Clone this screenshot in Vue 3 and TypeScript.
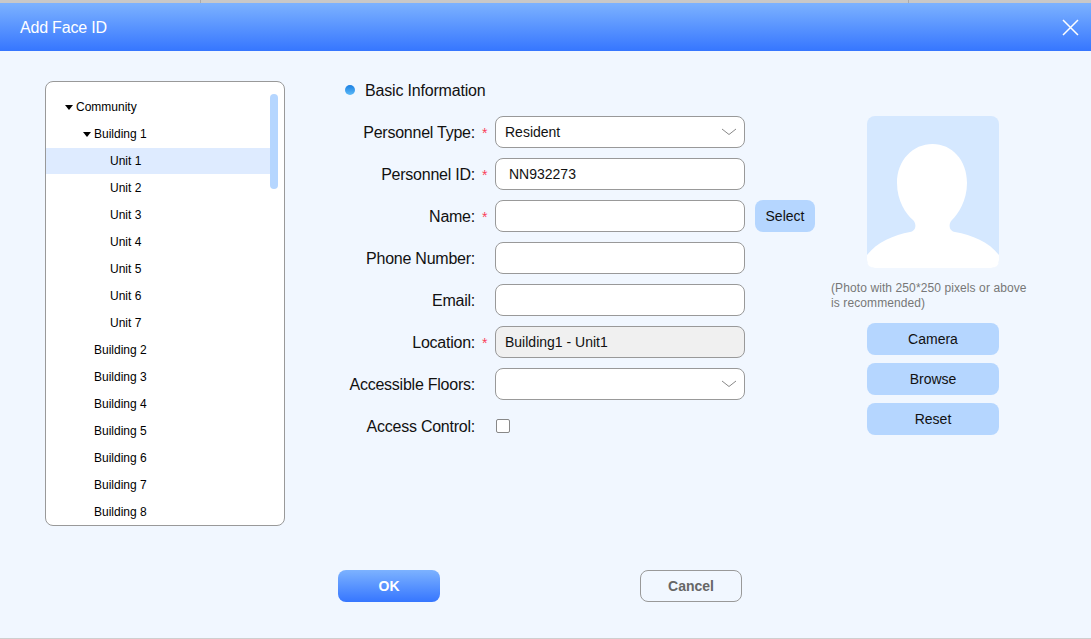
<script setup lang="ts">
interface TreeRow { label: string; level: number; caret?: boolean; selected?: boolean }
const rows: TreeRow[] = [
  { label: 'Community', level: 0, caret: true },
  { label: 'Building 1', level: 1, caret: true },
  { label: 'Unit 1', level: 3, selected: true },
  ...[2, 3, 4, 5, 6, 7].map((n) => ({ label: `Unit ${n}`, level: 3 })),
  ...[2, 3, 4, 5, 6, 7, 8].map((n) => ({ label: `Building ${n}`, level: 2 })),
]
const photoActions = ['Camera', 'Browse', 'Reset']
</script>

<template>
  <div class="dialog">
    <div class="top-strip"></div>
    <header class="titlebar">
      <span class="title">Add Face ID</span>
      <button class="close" aria-label="Close">
        <svg width="17" height="17" viewBox="0 0 17 17"><path d="M1 1 L16 16 M16 1 L1 16" stroke="#fff" stroke-width="1.5" fill="none" /></svg>
      </button>
    </header>
    <main class="body">
      <div class="content">
        <nav class="tree">
          <div
            v-for="row in rows"
            :key="row.label"
            class="tree-row"
            :class="[`level-${row.level}`, { selected: row.selected }]"
          >
            <span v-if="row.caret" class="caret"></span>{{ row.label }}
          </div>
          <div class="thumb"></div>
        </nav>

        <section class="form-col">
          <h2 class="section"><span class="bullet"></span><span class="section-text">Basic Information</span></h2>
          <div class="form">
            <label class="lbl">Personnel Type:</label><span class="star">*</span>
            <div class="field select">Resident<svg class="chev" width="16" height="8" viewBox="0 0 16 8"><path d="M1 1 L8 6.5 L15 1" /></svg></div>
            <span></span>

            <label class="lbl">Personnel ID:</label><span class="star">*</span>
            <input class="field id" value="NN932273" />
            <span></span>

            <label class="lbl">Name:</label><span class="star">*</span>
            <input class="field" />
            <button class="soft select-btn">Select</button>

            <label class="lbl">Phone Number:</label><span></span>
            <input class="field" />
            <span></span>

            <label class="lbl">Email:</label><span></span>
            <input class="field" />
            <span></span>

            <label class="lbl">Location:</label><span class="star">*</span>
            <input class="field readonly" readonly value="Building1 - Unit1" />
            <span></span>

            <label class="lbl">Accessible Floors:</label><span></span>
            <div class="field select"><svg class="chev" width="16" height="8" viewBox="0 0 16 8"><path d="M1 1 L8 6.5 L15 1" /></svg></div>
            <span></span>

            <label class="lbl">Access Control:</label><span></span>
            <div class="check-cell"><input class="check" type="checkbox" /></div>
            <span></span>
          </div>
        </section>

        <aside class="photo-col">
          <svg class="photo" width="132" height="152" viewBox="0 0 132 152">
            <rect width="132" height="152" rx="8" fill="#d5e8ff" />
            <path
              fill="#fff"
              d="M65.5 28 C85 28 100 44 100 67 C100 85 91 98 85 104 C81 108 82 115 88 116 C105 119 122 126 132 139 L132 144 Q132 152 124 152 L8 152 Q0 152 0 144 L0 139 C10 126 27 119 43 116 C49 115 50 108 46 104 C39 98 30 85 30 67 C30 44 46 28 65.5 28 Z"
            />
          </svg>
          <p class="hint">(Photo with 250*250 pixels or above is recommended)</p>
          <button v-for="a in photoActions" :key="a" class="soft action">{{ a }}</button>
        </aside>
      </div>
      <footer class="footer">
        <button class="ok">OK</button>
        <button class="cancel">Cancel</button>
      </footer>
    </main>
  </div>
</template>

<style scoped>
.dialog {
  width: 1091px;
  height: 639px;
  display: flex;
  flex-direction: column;
  font-family: "Liberation Sans", Arial, sans-serif;
  color: #111;
  background: #f1f7ff;
  overflow: hidden;
}
.top-strip {
  height: 3px;
  flex: none;
  background:
    linear-gradient(#aaa, #aaa) 200px 0 / 1px 100% no-repeat,
    linear-gradient(#aaa, #aaa) 908px 0 / 1px 100% no-repeat,
    #c8c8c8;
}
.titlebar {
  flex: none;
  height: 48px;
  display: flex;
  align-items: center;
  justify-content: space-between;
  padding: 0 12px 0 20px;
  background: linear-gradient(#7cb2ff, #3676ff);
}
.title {
  color: #fff;
  font-size: 16px;
  letter-spacing: -0.2px;
  padding-top: 1px;
}
.close {
  width: 17px;
  height: 17px;
  padding: 0;
  border: 0;
  background: none;
  display: block;
}
.close svg { display: block; }
.body {
  flex: 1;
  border-bottom: 1px solid #cfcfcf;
}
.content {
  display: flex;
  align-items: flex-start;
  padding: 30px 0 0 45px;
}
.tree {
  position: relative;
  box-sizing: border-box;
  width: 240px;
  height: 445px;
  flex: none;
  padding-top: 12px;
  background: #fff;
  border: 1px solid #999;
  border-radius: 8px;
  overflow: hidden;
}
.tree-row {
  box-sizing: border-box;
  width: 224px;
  height: 26px;
  margin-bottom: 1px;
  display: flex;
  align-items: center;
  font-size: 12px;
  color: #000;
}
.level-0 { padding-left: 19px; }
.level-1 { padding-left: 37px; }
.level-2 { padding-left: 48px; }
.level-3 { padding-left: 64px; }
.selected { background: #deebff; }
.caret {
  width: 0;
  height: 0;
  margin-right: 3px;
  margin-top: 1px;
  border-left: 4px solid transparent;
  border-right: 4px solid transparent;
  border-top: 5px solid #000;
}
.thumb {
  position: absolute;
  left: 224px;
  top: 12px;
  width: 8px;
  height: 95px;
  border-radius: 4px;
  background: #b5d6ff;
}
.form-col {
  margin-left: 60px;
  flex: none;
}
.section {
  margin: 0 0 17px;
  height: 18px;
  display: flex;
  align-items: center;
  font-size: 16px;
  font-weight: 400;
  letter-spacing: -0.18px;
}
.section-text { padding-top: 2px; }
.bullet {
  width: 10px;
  height: 10px;
  margin-right: 10px;
  border-radius: 50%;
  background: linear-gradient(#1b7fe2, #5cbaf8);
}
.form {
  display: grid;
  grid-template-columns: 130px 20px 250px 60px;
  grid-auto-rows: 32px;
  row-gap: 10px;
  column-gap: 0;
  align-items: center;
}
.lbl {
  text-align: right;
  font-size: 16px;
  letter-spacing: -0.24px;
  white-space: nowrap;
  padding-top: 2px;
}
.star {
  color: #fa3f5a;
  font-size: 14px;
  padding-left: 7px;
  padding-top: 2px;
}
.field {
  box-sizing: border-box;
  width: 250px;
  height: 32px;
  margin: 0;
  padding: 0 9px;
  background: #fff;
  border: 1px solid #999;
  border-radius: 8px;
  font: 14px "Liberation Sans", Arial, sans-serif;
  color: #111;
  outline: none;
}
.id { padding-left: 13px; }
.readonly { background: #f0f0f0; }
.select {
  display: flex;
  align-items: center;
  justify-content: space-between;
}
.chev {
  margin-left: auto;
  margin-right: -2px;
  flex: none;
}
.chev path {
  fill: none;
  stroke: #888;
  stroke-width: 1;
}
.check-cell { display: flex; }
.check {
  appearance: none;
  width: 14px;
  height: 14px;
  margin: 0 0 0 1px;
  background: #fff;
  border: 1px solid #888;
  border-radius: 2px;
}
.soft {
  border: 0;
  border-radius: 8px;
  background: #b5d6ff;
  color: #111;
  font: 14px "Liberation Sans", Arial, sans-serif;
  padding: 0;
}
.select-btn {
  width: 60px;
  height: 32px;
  margin-left: 10px;
}
.photo-col {
  box-sizing: border-box;
  width: 204px;
  margin-left: 26px;
  padding-top: 35px;
  display: flex;
  flex-direction: column;
  align-items: center;
  flex: none;
}
.photo { display: block; flex: none; }
.hint {
  margin: 13px 0 12px;
  width: 100%;
  font-size: 12px;
  line-height: 15px;
  letter-spacing: 0.1px;
  color: #777;
}
.action {
  width: 132px;
  height: 32px;
  margin-bottom: 8px;
  flex: none;
}
.footer {
  display: flex;
  gap: 200px;
  margin-top: 44px;
  padding-left: 338px;
}
.ok, .cancel {
  box-sizing: border-box;
  width: 102px;
  height: 32px;
  padding: 0;
  border-radius: 8px;
  font: bold 14px "Liberation Sans", Arial, sans-serif;
}
.ok {
  border: 0;
  color: #fff;
  background: linear-gradient(#7cb2ff, #3676ff);
}
.cancel {
  background: #f1f7ff;
  color: #666;
  border: 1px solid #999;
}
</style>
